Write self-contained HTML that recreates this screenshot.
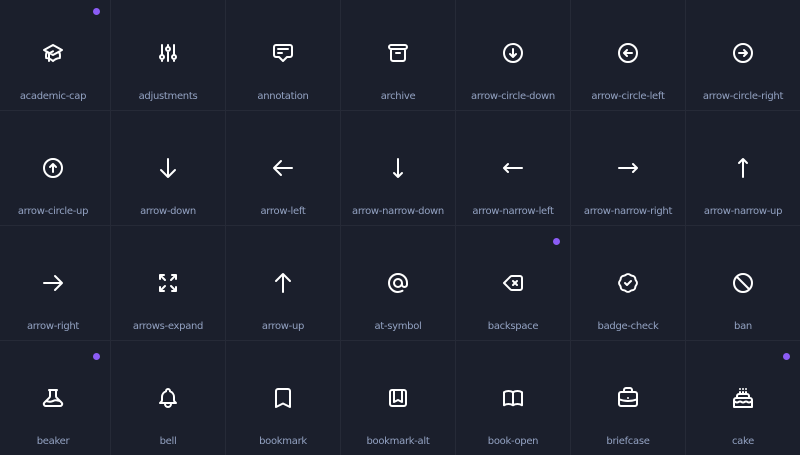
<!DOCTYPE html>
<html><head><meta charset="utf-8"><style>
html,body{margin:0;padding:0;width:800px;height:447px;overflow:hidden;background:#262a37;}
.g{position:absolute;left:-4px;top:-4px;display:grid;grid-template-columns:repeat(7,114px);grid-auto-rows:114px;gap:1px;background:#262a37;}
.c{position:relative;background:#1b1f2c;}
.c svg{position:absolute;left:45px;top:45px;width:24px;height:24px;fill:none;stroke:#fff;stroke-width:2;stroke-linecap:round;stroke-linejoin:round;}
.c span{position:absolute;left:0;right:0;top:95px;text-align:center;font:10px "DejaVu Sans","Liberation Sans",sans-serif;letter-spacing:-0.3px;color:#93a2c2;white-space:nowrap;}
.d:after{content:"";position:absolute;left:97px;top:12px;width:7px;height:7px;border-radius:50%;background:#8b5cf6;}
</style></head><body><div class="g">
<div class="c d"><svg viewBox="0 0 24 24"><path d="M12 14l9-5-9-5-9 5 9 5zm0 0l6.16-3.422a12.083 12.083 0 01.665 6.479A11.952 11.952 0 0012 20.055a11.952 11.952 0 00-6.824-2.998 12.078 12.078 0 01.665-6.479L12 14zm-4 6v-7.5l4-2.222"/></svg><span>academic-cap</span></div>
<div class="c"><svg viewBox="0 0 24 24"><path d="M12 6V4m0 2a2 2 0 100 4m0-4a2 2 0 110 4m-6 8a2 2 0 100-4m0 4a2 2 0 110-4m0 4v2m0-6V4m6 6v10m6-2a2 2 0 100-4m0 4a2 2 0 110-4m0 4v2m0-6V4"/></svg><span>adjustments</span></div>
<div class="c"><svg viewBox="0 0 24 24"><path d="M7 8h10M7 12h4m1 8l-4-4H5a2 2 0 01-2-2V6a2 2 0 012-2h14a2 2 0 012 2v8a2 2 0 01-2 2h-3l-4 4z"/></svg><span>annotation</span></div>
<div class="c"><svg viewBox="0 0 24 24"><path d="M5 8h14M5 8a2 2 0 110-4h14a2 2 0 110 4M5 8v10a2 2 0 002 2h10a2 2 0 002-2V8m-9 4h4"/></svg><span>archive</span></div>
<div class="c"><svg viewBox="0 0 24 24"><path d="M15 13l-3 3m0 0l-3-3m3 3V8m0 13a9 9 0 110-18 9 9 0 010 18z"/></svg><span>arrow-circle-down</span></div>
<div class="c"><svg viewBox="0 0 24 24"><path d="M11 15l-3-3m0 0l3-3m-3 3h8M3 12a9 9 0 1118 0 9 9 0 01-18 0z"/></svg><span>arrow-circle-left</span></div>
<div class="c"><svg viewBox="0 0 24 24"><path d="M13 9l3 3m0 0l-3 3m3-3H8m13 0a9 9 0 11-18 0 9 9 0 0118 0z"/></svg><span>arrow-circle-right</span></div>

<div class="c"><svg viewBox="0 0 24 24"><path d="M9 11l3-3m0 0l3 3m-3-3v8m0-13a9 9 0 110 18 9 9 0 010-18z"/></svg><span>arrow-circle-up</span></div>
<div class="c"><svg viewBox="0 0 24 24"><path d="M19 14l-7 7m0 0l-7-7m7 7V3"/></svg><span>arrow-down</span></div>
<div class="c"><svg viewBox="0 0 24 24"><path d="M10 19l-7-7m0 0l7-7m-7 7h18"/></svg><span>arrow-left</span></div>
<div class="c"><svg viewBox="0 0 24 24"><path d="M16 17l-4 4m0 0l-4-4m4 4V3"/></svg><span>arrow-narrow-down</span></div>
<div class="c"><svg viewBox="0 0 24 24"><path d="M7 16l-4-4m0 0l4-4m-4 4h18"/></svg><span>arrow-narrow-left</span></div>
<div class="c"><svg viewBox="0 0 24 24"><path d="M17 8l4 4m0 0l-4 4m4-4H3"/></svg><span>arrow-narrow-right</span></div>
<div class="c"><svg viewBox="0 0 24 24"><path d="M8 7l4-4m0 0l4 4m-4-4v18"/></svg><span>arrow-narrow-up</span></div>

<div class="c"><svg viewBox="0 0 24 24"><path d="M14 5l7 7m0 0l-7 7m7-7H3"/></svg><span>arrow-right</span></div>
<div class="c"><svg viewBox="0 0 24 24"><path d="M4 8V4m0 0h4M4 4l5 5m11-1V4m0 0h-4m4 0l-5 5M4 16v4m0 0h4m-4 0l5-5m11 5l-5-5m5 5v-4m0 4h-4"/></svg><span>arrows-expand</span></div>
<div class="c"><svg viewBox="0 0 24 24"><path d="M5 10l7-7m0 0l7 7m-7-7v18"/></svg><span>arrow-up</span></div>
<div class="c"><svg viewBox="0 0 24 24"><path d="M16 12a4 4 0 10-8 0 4 4 0 008 0zm0 0v1.5a2.5 2.5 0 005 0V12a9 9 0 10-9 9m4.5-1.206a8.959 8.959 0 01-4.5 1.207"/></svg><span>at-symbol</span></div>
<div class="c d"><svg viewBox="0 0 24 24"><path d="M12 14l2-2m0 0l2-2m-2 2l-2-2m2 2l2 2M3 12l6.414 6.414a2 2 0 001.414.586H19a2 2 0 002-2V7a2 2 0 00-2-2h-8.172a2 2 0 00-1.414.586L3 12z"/></svg><span>backspace</span></div>
<div class="c"><svg viewBox="0 0 24 24"><path d="M9 12l2 2 4-4M7.835 4.697a3.42 3.42 0 001.946-.806 3.42 3.42 0 014.438 0 3.42 3.42 0 001.946.806 3.42 3.42 0 013.138 3.138 3.42 3.42 0 00.806 1.946 3.42 3.42 0 010 4.438 3.42 3.42 0 00-.806 1.946 3.42 3.42 0 01-3.138 3.138 3.42 3.42 0 00-1.946.806 3.42 3.42 0 01-4.438 0 3.42 3.420 0 00-1.946-.806 3.42 3.42 0 01-3.138-3.138 3.42 3.42 0 00-.806-1.946 3.42 3.42 0 010-4.438 3.42 3.42 0 00.806-1.946 3.42 3.42 0 013.138-3.138z"/></svg><span>badge-check</span></div>
<div class="c"><svg viewBox="0 0 24 24"><path d="M18.364 18.364A9 9 0 005.636 5.636m12.728 12.728A9 9 0 015.636 5.636m12.728 12.728L5.636 5.636"/></svg><span>ban</span></div>

<div class="c d"><svg viewBox="0 0 24 24"><path d="M19.428 15.428a2 2 0 00-1.022-.547l-2.387-.477a6 6 0 00-3.860.517l-.318.158a6 6 0 01-3.860.517L6.050 15.210a2 2 0 00-1.806.547M8 4h8l-1 1v5.172a2 2 0 00.586 1.414l5 5c1.260 1.260.367 3.414-1.415 3.414H4.828c-1.782 0-2.674-2.154-1.414-3.414l5-5A2 2 0 009 10.172V5L8 4z"/></svg><span>beaker</span></div>
<div class="c"><svg viewBox="0 0 24 24"><path d="M15 17h5l-1.405-1.405A2.032 2.032 0 0118 14.158V11a6.002 6.002 0 00-4-5.659V5a2 2 0 10-4 0v.341C7.670 6.165 6 8.388 6 11v3.159c0 .538-.214 1.055-.595 1.436L4 17h5m6 0v1a3 3 0 11-6 0v-1m6 0H9"/></svg><span>bell</span></div>
<div class="c"><svg viewBox="0 0 24 24"><path d="M5 5a2 2 0 012-2h10a2 2 0 012 2v16l-7-3.5L5 21V5z"/></svg><span>bookmark</span></div>
<div class="c"><svg viewBox="0 0 24 24"><path d="M16 4v12l-4-2-4 2V4M6 20h12a2 2 0 002-2V6a2 2 0 00-2-2H6a2 2 0 00-2 2v12a2 2 0 002 2z"/></svg><span>bookmark-alt</span></div>
<div class="c"><svg viewBox="0 0 24 24"><path d="M12 6.253v13m0-13C10.832 5.477 9.246 5 7.5 5S4.168 5.477 3 6.253v13C4.168 18.477 5.754 18 7.5 18s3.332.477 4.5 1.253m0-13C13.168 5.477 14.754 5 16.5 5c1.747 0 3.332.477 4.5 1.253v13C19.832 18.477 18.247 18 16.5 18c-1.746 0-3.332.477-4.5 1.253"/></svg><span>book-open</span></div>
<div class="c"><svg viewBox="0 0 24 24"><path d="M21 13.255A23.931 23.931 0 0112 15c-3.183 0-6.220-.62-9-1.745M16 6V4a2 2 0 00-2-2h-4a2 2 0 00-2 2v2m4 6h.01M5 20h14a2 2 0 002-2V8a2 2 0 00-2-2H5a2 2 0 00-2 2v10a2 2 0 002 2z"/></svg><span>briefcase</span></div>
<div class="c d"><svg viewBox="0 0 24 24"><path d="M21 15.546c-.523 0-1.046.151-1.5.454a2.704 2.704 0 01-3 0 2.704 2.704 0 00-3 0 2.704 2.704 0 01-3 0 2.704 2.704 0 00-3 0 2.704 2.704 0 01-3 0 2.701 2.701 0 00-1.5-.454M9 6v2m3-2v2m3-2v2M9 3h.01M12 3h.01M15 3h.01M21 21v-7a2 2 0 00-2-2H5a2 2 0 00-2 2v7h18zm-3-9v-2a2 2 0 00-2-2H8a2 2 0 00-2 2v2h12z"/></svg><span>cake</span></div>
</div></body></html>
